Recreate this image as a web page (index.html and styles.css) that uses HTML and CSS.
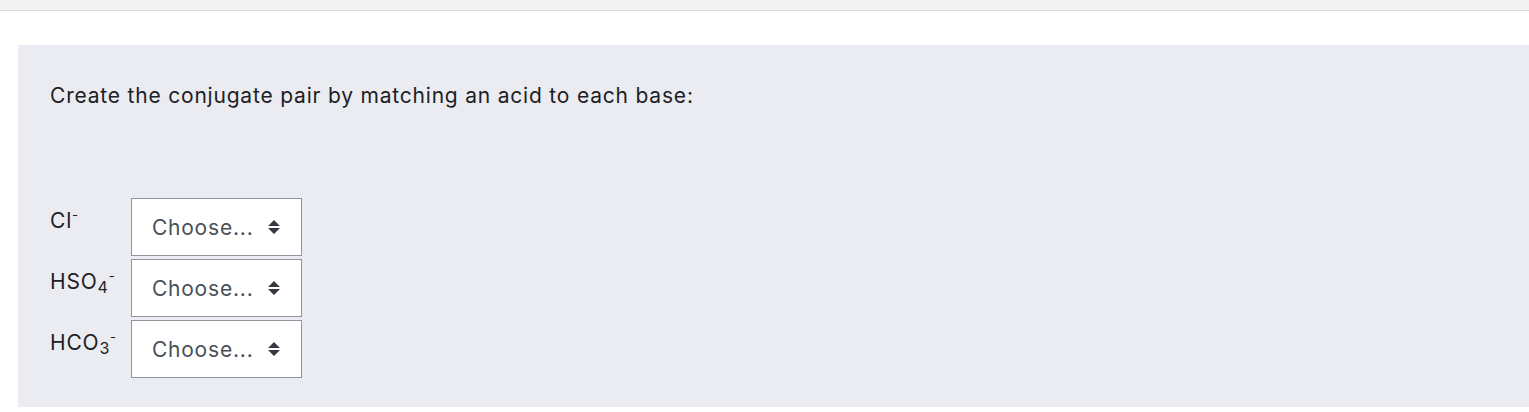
FILE: index.html
```html
<!DOCTYPE html>
<html lang="en">
<head>
    <meta charset="UTF-8">
    <meta name="viewport" content="width=device-width, initial-scale=1.0">
    <title>Matching question</title>
    <link rel="stylesheet" href="styles.css">
</head>
<body>

    <div class="topbar"></div>

    <div class="formulation">
        <p class="qtext">Create the conjugate pair by matching an acid to each base:</p>

        <table class="answer">
            <tr>
                <td class="label">Cl<sup>-</sup></td>
                <td class="control">
                    <span class="select-wrap">
                        <select class="choice"><option>Choose...</option></select>
                        <svg class="arrow" viewBox="0 0 12 14" width="12" height="14"><path d="M6 0 L12 6 H0 Z M0 8 H12 L6 14 Z" fill="#343a40"/></svg>
                    </span>
                </td>
            </tr>
            <tr>
                <td class="label">HSO<sub>4</sub><sup>-</sup></td>
                <td class="control">
                    <span class="select-wrap">
                        <select class="choice"><option>Choose...</option></select>
                        <svg class="arrow" viewBox="0 0 12 14" width="12" height="14"><path d="M6 0 L12 6 H0 Z M0 8 H12 L6 14 Z" fill="#343a40"/></svg>
                    </span>
                </td>
            </tr>
            <tr>
                <td class="label">HCO<sub>3</sub><sup>-</sup></td>
                <td class="control">
                    <span class="select-wrap">
                        <select class="choice"><option>Choose...</option></select>
                        <svg class="arrow" viewBox="0 0 12 14" width="12" height="14"><path d="M6 0 L12 6 H0 Z M0 8 H12 L6 14 Z" fill="#343a40"/></svg>
                    </span>
                </td>
            </tr>
        </table>
    </div>

</body>
</html>
```

FILE: styles.css
```css
body {
    margin: 0;
    font-family: Inter, "Liberation Sans", Arial, sans-serif;
    color: #1d2125;
    background-color: #fff;
}

.topbar {
    height: 10px;
    background-color: #f2f2f2;
    border-bottom: 1px solid #dcdcdc;
}

.formulation {
    margin: 34px 0 0 18px;
    padding: 36px 32px 26px 32px;
    background-color: #ebecf1;
}

.qtext {
    margin: 0 0 87px 0;
    font-size: 21px;
    letter-spacing: 0.8px;
    line-height: 30px;
}

.answer {
    border-collapse: separate;
    border-spacing: 0 3px;
    margin-top: -3px;
}

.answer td {
    padding: 0;
}

.label {
    font-size: 21px;
    letter-spacing: 0.8px;
    line-height: 30px;
    vertical-align: top;
    padding-top: 8px !important;
    padding-right: 14px !important;
    white-space: nowrap;
}

.label sup {
    font-size: 13px;
    vertical-align: 8px;
    line-height: 0;
}

.label sub {
    font-size: 16px;
    vertical-align: -4px;
    line-height: 0;
}

.select-wrap {
    position: relative;
    display: inline-block;
    vertical-align: top;
}

.choice {
    -webkit-appearance: none;
    appearance: none;
    display: block;
    width: 171px;
    height: 58px;
    margin: 0;
    padding: 0 0 0 20px;
    border: 1px solid #8f959e;
    border-radius: 0;
    background-color: #fff;
    color: #495057;
    font-family: Inter, "Liberation Sans", Arial, sans-serif;
    font-size: 21px;
    letter-spacing: 0.8px;
}

.arrow {
    position: absolute;
    left: 137px;
    top: 22px;
    pointer-events: none;
}
```
